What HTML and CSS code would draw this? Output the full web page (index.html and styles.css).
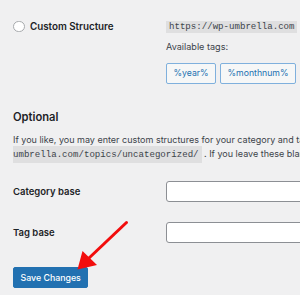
FILE: index.html
```html
<!DOCTYPE html>
<html lang="en">
<head>
<meta charset="utf-8">
<title>Permalink Settings</title>
<link rel="stylesheet" href="styles.css">
</head>
<body>
<div class="page">
  <div class="row row-custom">
    <div class="th">
      <label class="radio-label"><span class="radio"></span>Custom Structure</label>
    </div>
    <div class="td">
      <div class="struct"><code class="base">https://wp-umbrella.com</code><span class="struct-input"></span></div>
      <div class="avail">Available tags:</div>
      <ul class="tags">
        <li><button class="tag">%year%</button></li>
        <li><button class="tag">%monthnum%</button></li>
        <li><button class="tag">%day%</button></li>
        <li><button class="tag">%hour%</button></li>
      </ul>
    </div>
  </div>

  <h2 class="section">Optional</h2>
  <p class="desc">If you like, you may enter custom structures for your category and tag URLs here. For example, using <code>topics</code> as your category base would make your category links like <code class="wrap">https://wp-<br>umbrella.com/topics/uncategorized/</code> . If you leave these blank the defaults will be used.</p>

  <div class="row row-field">
    <label class="th field-label">Category base</label>
    <div class="td"><input class="text" type="text"></div>
  </div>
  <div class="row row-field row-tag">
    <label class="th field-label">Tag base</label>
    <div class="td"><input class="text" type="text"></div>
  </div>

  <div class="submit"><button class="primary">Save Changes</button></div>
</div>

<svg class="arrow" width="300" height="295" viewBox="0 0 300 295">
  <line x1="126.5" y1="222.5" x2="88" y2="259" stroke="#f20d0d" stroke-width="3" stroke-linecap="round"/>
  <polygon points="77.5,269.5 82.5,251 97,265" fill="#f20d0d"/>
</svg>
</body>
</html>
```

FILE: styles.css
```css
html, body {
  margin: 0;
  padding: 0;
}
body {
  background: #f0f0f1;
  width: 300px;
  height: 295px;
  overflow: hidden;
  position: relative;
  font-family: "Inter", "Noto Sans", sans-serif;
  font-size: 9.1px;
  color: #3c434a;
}
.page {
  width: 700px;
  padding: 21px 0 0 13px;
}
.row {
  display: flex;
}
.th {
  width: 153px;
  flex: none;
}
.td {
  flex: 1;
}
.row-custom {
  align-items: flex-start;
}
.radio-label {
  display: flex;
  align-items: center;
  gap: 5.5px;
  font-size: 9.8px;
  font-weight: 600;
  color: #1d2327;
  line-height: 12px;
  height: 12px;
  margin-top: -0.5px;
}
.radio {
  display: block;
  width: 9.5px;
  height: 9.5px;
  border: 1px solid #a7aaad;
  border-radius: 50%;
  background: #fff;
  flex: none;
}
.struct {
  display: flex;
  align-items: flex-start;
  gap: 4px;
  height: 12px;
}
code {
  font-family: "Liberation Mono", "DejaVu Sans Mono", monospace;
  font-size: 9.1px;
  background: #dfdfe0;
  color: #3c434a;
}
.base {
  display: block;
  flex: none;
  height: 12px;
  line-height: 12px;
  padding: 0 2px 0 3px;
  white-space: nowrap;
}
.struct-input {
  display: block;
  flex: none;
  width: 200px;
  height: 21px;
  margin-top: -4.5px;
  background: #fff;
  border: 1px solid #8c8f94;
  border-radius: 3px;
}
.avail {
  line-height: 14px;
  margin-top: 7px;
  color: #3c434a;
}
.tags {
  list-style: none;
  margin: 9px 0 0;
  padding: 0;
  display: flex;
  gap: 4px;
}
.tags li {
  display: block;
}
.tag {
  display: block;
  height: 21px;
  padding: 0 6.5px;
  border: 1px solid #7fb0dd;
  border-radius: 2px;
  background: #f6f7f7;
  color: #2271b1;
  font-family: inherit;
  font-size: 8.7px;
  line-height: 19px;
}
.section {
  font-size: 11.2px;
  font-weight: 600;
  line-height: 15px;
  color: #1d2327;
  margin: 25.7px 0 0;
}
.desc {
  white-space: nowrap;
  font-size: 9px;
  line-height: 14px;
  margin: 8.3px 0 0;
}
.desc code {
  line-height: 1;
  padding: 1px 3px;
}
.desc code.wrap {
  -webkit-box-decoration-break: slice;
  box-decoration-break: slice;
  padding: 3px 3px 3px 0;
}
.row-field {
  align-items: center;
  margin-top: 19.8px;
}
.row-tag {
  margin-top: 20px;
}
.field-label {
  font-size: 9.5px;
  font-weight: 600;
  color: #1d2327;
  line-height: 21px;
}
.text {
  display: block;
  box-sizing: border-box;
  width: 250px;
  height: 21px;
  margin: 0;
  padding: 0 5px;
  background: #fff;
  border: 1px solid #8c8f94;
  border-radius: 3px;
}
.submit {
  margin-top: 24px;
}
.primary {
  display: block;
  height: 21px;
  padding: 0 6.5px;
  border: 1px solid #2271b1;
  border-radius: 2px;
  background: #2271b1;
  color: #fff;
  font-family: inherit;
  font-size: 8.8px;
  font-weight: 500;
  line-height: 19px;
}
.arrow {
  position: absolute;
  left: 0;
  top: 0;
}
```
